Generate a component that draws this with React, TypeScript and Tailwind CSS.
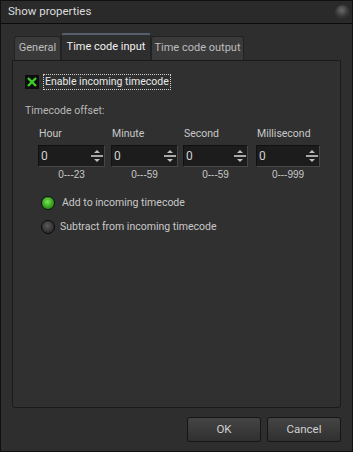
import React from "react";

function Spin({ label, range, w }: { label: string; range: string; w: string }) {
  return (
    <div className={"flex flex-col " + w}>
      <div className="h-[15px] leading-[15px] pl-[1px]">{label}</div>
      <div className="mt-[4px] h-[22px] flex bg-[#1c1c1c] border border-[#111] border-b-[#474747] border-r-[#474747]">
        <div className="flex-1 pl-[2px] leading-[20px] text-[#d0d0d0] text-[12px]">0</div>
        <div className="w-[15px] flex flex-col items-center justify-center">
          <svg width="12" height="18" viewBox="0 0 12 18">
            <path d="M3 6 L6 3 L9 6 Z" fill="#bdbdbd" />
            <rect x="0" y="8" width="12" height="2" fill="#a8a8a8" />
            <path d="M3 12 L9 12 L6 15 Z" fill="#bdbdbd" />
          </svg>
        </div>
      </div>
      <div className="text-center text-[10px] mt-[1px] leading-[13px] font-['Liberation_Sans',sans-serif]">{range}</div>
    </div>
  );
}

export default function App() {
  return (
    <div
      className="w-[353px] h-[452px] bg-[#2e2e2e] border border-[#101010] flex flex-col text-[#c8c8c8] overflow-hidden whitespace-nowrap font-['Roboto','Liberation_Sans',sans-serif] text-[10.5px]"
    >
      <div className="h-[23px] flex items-center justify-between pl-[7px] pr-[2px] bg-[#2a2a2a] border-b border-[#0c0c0c]">
        <span className="text-[#dcdcdc] text-[11.5px]">Show properties</span>
        <div
          className="w-[15px] h-[15px] rounded-full bg-[radial-gradient(circle_at_45%_35%,#6a6a6a_0%,#3a3a3a_45%,#1a1a1a_100%)]"
        />
      </div>
      <div className="flex items-end pl-[13px] pt-[8px] h-[36px] text-[11px]">
        <div className="h-[24px] w-[47px] flex items-center justify-center bg-[#3a3a3a] border border-[#222] border-b-0 rounded-t-[3px] text-[#bdbdbd]">
          General
        </div>
        <div className="h-[27px] w-[90px] flex items-center justify-center bg-[#2e2e2e] border border-[#222] border-b-0 border-t-2 border-t-[#56606c] rounded-t-[3px] text-[#f0f0f0]">
          Time code input
        </div>
        <div className="h-[24px] w-[93px] flex items-center justify-center bg-[#3a3a3a] border border-[#222] border-b-0 rounded-t-[3px] text-[#bdbdbd]">
          Time code output
        </div>
      </div>
      <div className="mx-[11px] h-[348px] border border-[#1a1a1a] rounded-b-[3px] bg-[#303030] flex flex-col pl-[12px] pt-[13px]">
        <div className="flex items-center h-[16px]">
          <div className="w-[14px] h-[14px] bg-[#0e0e0e] flex items-center justify-center">
            <svg width="12" height="12" viewBox="0 0 12 12">
              <path d="M2 2 L10 10 M10 2 L2 10" stroke="#3ecf2a" strokeWidth="2.4" />
            </svg>
          </div>
          <div className="ml-[4px] px-[1px] border border-dotted border-[#d0d0d0] text-[#e8e8e8] leading-[14px]">
            Enable incoming timecode
          </div>
        </div>
        <div className="mt-[13px] h-[15px] leading-[15px] text-[#b8b8b8]">Timecode offset:</div>
        <div className="mt-[8px] flex pl-[13px]">
          <Spin label="Hour" range="0---23" w="w-[67px] mr-[6px]" />
          <Spin label="Minute" range="0---59" w="w-[67px] mr-[5px]" />
          <Spin label="Second" range="0---59" w="w-[65px] mr-[8px]" />
          <Spin label="Millisecond" range="0---999" w="w-[64px]" />
        </div>
        <div className="mt-[14px] flex flex-col pl-[16px]">
          <div className="flex items-center h-[15px]">
            <div
              className="w-[14px] h-[14px] rounded-full border border-[#111] bg-[radial-gradient(circle_at_45%_40%,#7be35a_0%,#3aa822_50%,#1f6a10_100%)]"
            />
            <span className="ml-[7px]">Add to incoming timecode</span>
          </div>
          <div className="flex items-center h-[15px] mt-[9px]">
            <div
              className="w-[14px] h-[14px] rounded-full border border-[#0a0a0a] bg-[radial-gradient(circle_at_45%_40%,#5a5a5a_0%,#3a3a3a_50%,#1e1e1e_100%)]"
            />
            <span className="ml-[5px]">Subtract from incoming timecode</span>
          </div>
        </div>
      </div>
      <div className="flex justify-end gap-[6px] pr-[11px] pt-[9px]">
        <button className="w-[74px] h-[25px] rounded-[3px] border border-[#151515] bg-gradient-to-b from-[#454545] to-[#303030] text-[#d0d0d0] text-[11.5px]">
          OK
        </button>
        <button className="w-[74px] h-[25px] rounded-[3px] border border-[#151515] bg-gradient-to-b from-[#454545] to-[#303030] text-[#d0d0d0] text-[11.5px]">
          Cancel
        </button>
      </div>
    </div>
  );
}
